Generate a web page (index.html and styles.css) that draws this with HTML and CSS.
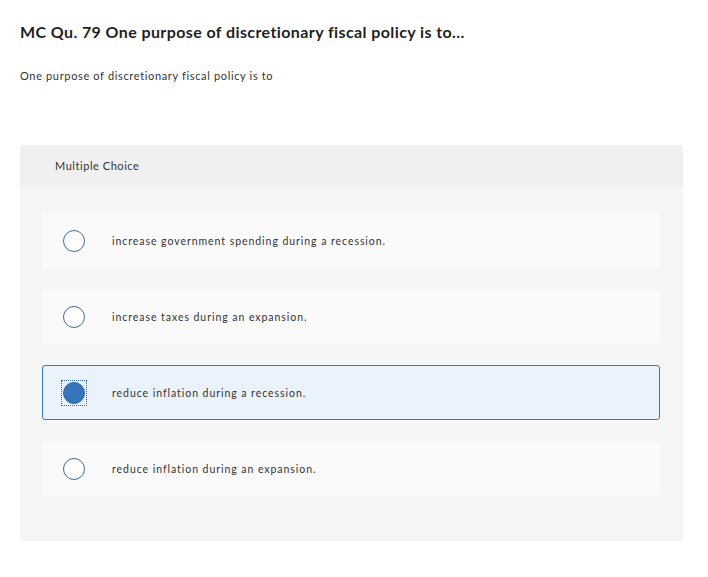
FILE: index.html
```html
<!DOCTYPE html>
<html>
<head>
<meta charset="utf-8">
<link rel="stylesheet" href="styles.css">
</head>
<body>
<div class="page">
  <h1 class="title">MC Qu. 79 One purpose of discretionary fiscal policy is to...</h1>
  <p class="prompt">One purpose of discretionary fiscal policy is to</p>
  <div class="panel">
    <div class="panel-head">Multiple Choice</div>
    <div class="panel-body">
      <div class="option"><span class="focus"><span class="radio"></span></span><span class="label">increase government spending during a recession.</span></div>
      <div class="option"><span class="focus"><span class="radio"></span></span><span class="label">increase taxes during an expansion.</span></div>
      <div class="option selected"><span class="focus focused"><span class="radio checked"></span></span><span class="label">reduce inflation during a recession.</span></div>
      <div class="option"><span class="focus"><span class="radio"></span></span><span class="label">reduce inflation during an expansion.</span></div>
    </div>
  </div>
</div>
</body>
</html>
```

FILE: styles.css
```css
html, body { margin: 0; padding: 0; background: #fff; }
body { font-family: Lato, "Open Sans", sans-serif; color: #222; }
.page { padding: 20px 25px 0 20px; }
.title { margin: 0; font-size: 16px; font-weight: 700; line-height: 24px; letter-spacing: 0.4px; color: #1f1f1f; }
.prompt { margin: 24px 0 0; font-size: 11px; line-height: 16px; letter-spacing: 0.65px; color: #333; }
.panel { margin-top: 61px; background: #f5f5f5; border-radius: 2px; overflow: hidden; }
.panel-head { height: 41px; box-sizing: border-box; padding: 0 35px; background: #f0f0f0; display: flex; align-items: center; font-size: 11px; letter-spacing: 0.55px; color: #333; }
.panel-body { padding: 27px 23px 45px 22px; display: flex; flex-direction: column; gap: 21px; }
.option { height: 55px; box-sizing: border-box; background: #fafafa; border: 1px solid transparent; border-radius: 3px; display: flex; align-items: center; padding-left: 19px; }
.option.selected { background: #eaf2fb; border-color: #3478c6; }
.focus { width: 24px; height: 24px; display: flex; align-items: center; justify-content: center; flex: none; }
.focus.focused { outline: 1px dotted #2f68a6; }
.radio { width: 22px; height: 22px; box-sizing: border-box; border: 1.5px solid #3c6d9e; border-radius: 50%; background: #fff; flex: none; }
.radio.checked { background: #3575b9; border-color: #2f68a6; }
.label { margin-left: 26px; font-size: 10.5px; letter-spacing: 0.95px; color: #333; }
```
